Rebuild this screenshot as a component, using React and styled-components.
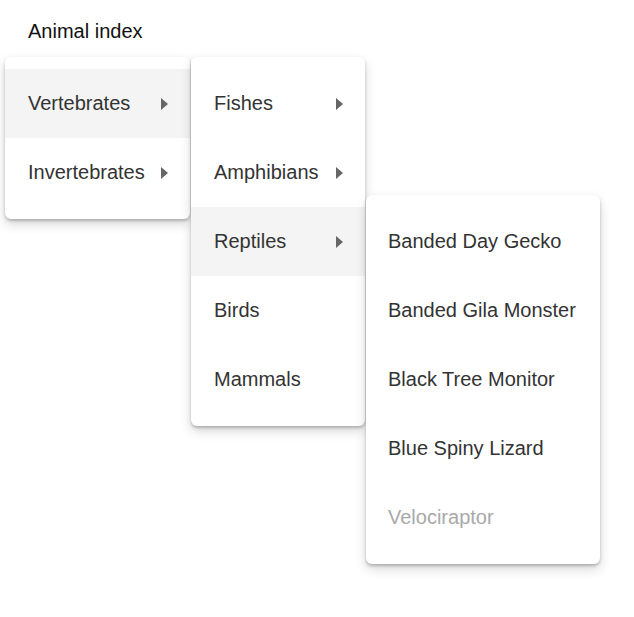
import React from 'react';
import styled, { createGlobalStyle } from 'styled-components';

const GlobalStyle = createGlobalStyle`
  body {
    margin: 0;
    font-family: "Liberation Sans", Arial, sans-serif;
    background: #fff;
  }
`;

const Page = styled.div`
  position: relative;
  height: 617px;
  padding: 19px 0 0 28px;
  box-sizing: border-box;
`;

const Title = styled.div`
  font-size: 20px;
  line-height: 24px;
  color: #111;
`;

const Menu = styled.ul`
  position: absolute;
  top: ${({ top }) => top}px;
  left: ${({ left }) => left};
  width: ${({ width }) => width}px;
  margin: 0;
  padding: 12px 0 12px;
  list-style: none;
  background: #fff;
  border-radius: 6px;
  box-shadow: 0 2px 3px rgba(0, 0, 0, 0.22), 0 5px 12px rgba(0, 0, 0, 0.16);
  box-sizing: border-box;
`;

const Item = styled.li`
  position: relative;
  display: flex;
  align-items: center;
  justify-content: space-between;
  height: 69px;
  padding: 0 23px 0 ${({ inset }) => inset || 23}px;
  font-size: 20px;
  color: ${({ disabled }) => (disabled ? '#a9a9a9' : '#333')};
  background: ${({ active }) => (active ? '#f4f4f4' : 'transparent')};
`;

const Arrow = () => (
  <svg width="7" height="12" viewBox="0 0 7 12" style={{ marginRight: -1 }}>
    <polygon points="0,0 7,6 0,12" fill="#666" />
  </svg>
);

const reptiles = [
  'Banded Day Gecko',
  'Banded Gila Monster',
  'Black Tree Monitor',
  'Blue Spiny Lizard',
];

export default function App() {
  return (
    <>
      <GlobalStyle />
      <Page>
        <Title>Animal index</Title>
        <Menu top={57} left="5px" width={185}>
          <Item active>
            Vertebrates <Arrow />
            <Menu top={-12} left="calc(100% + 1px)" width={174}>
              <Item>Fishes <Arrow /></Item>
              <Item>Amphibians <Arrow /></Item>
              <Item active>
                Reptiles <Arrow />
                <Menu top={-12} left="calc(100% + 1px)" width={234}>
                  {reptiles.map((r) => (
                    <Item key={r} inset={22}>{r}</Item>
                  ))}
                  <Item disabled inset={22}>Velociraptor</Item>
                </Menu>
              </Item>
              <Item>Birds</Item>
              <Item>Mammals</Item>
            </Menu>
          </Item>
          <Item>Invertebrates <Arrow /></Item>
        </Menu>
      </Page>
    </>
  );
}
